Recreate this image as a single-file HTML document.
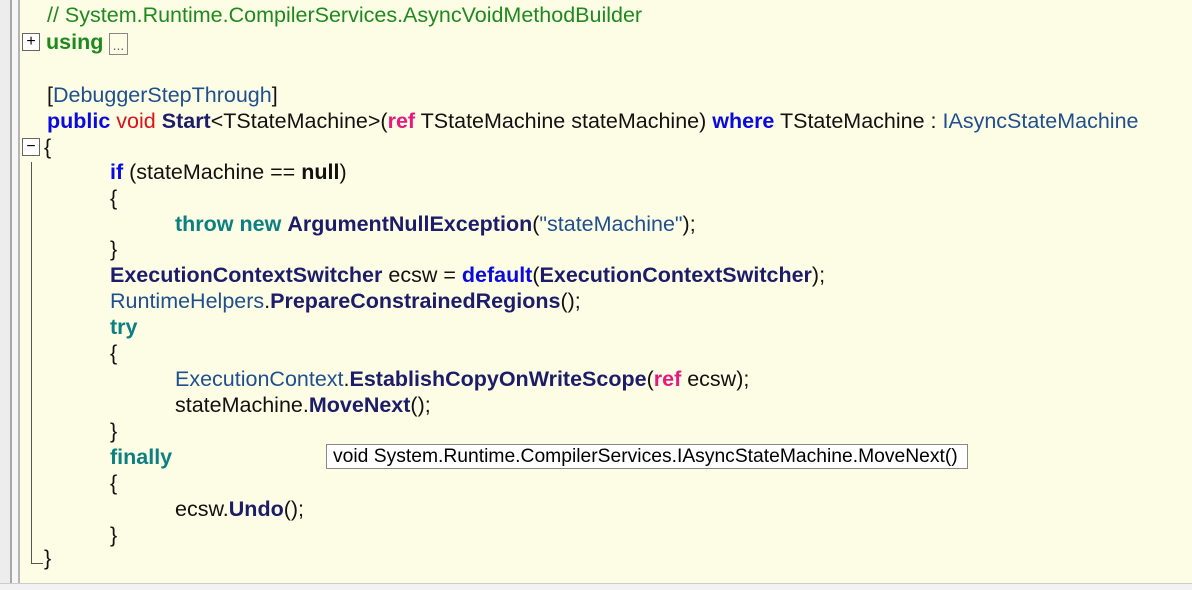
<!DOCTYPE html>
<html><head><meta charset="utf-8"><style>
body{margin:0;width:1192px;height:589px;overflow:hidden;background:#fdfde6;font-family:"Liberation Sans",Arial,sans-serif;position:relative}
.g0{position:absolute;left:0;top:0;width:10px;height:589px;background:#ededed}
.g1{position:absolute;left:10px;top:0;width:2px;height:589px;background:#a8a8a8}
.g2{position:absolute;left:12px;top:0;width:6px;height:589px;background:#f6f6f6}
.g3{position:absolute;left:18px;top:0;width:2px;height:589px;background:#b5b5b5}
.bot{position:absolute;left:0;top:583px;width:1192px;height:6px;background:#f2f2f2;border-top:1px solid #ccc}
.l{position:absolute;font-size:21.5px;white-space:pre;color:#111;line-height:26px}
b{font-weight:bold}
.cm{color:#1e8a1e}.gr{color:#1e8a1e;font-weight:bold}
.ty{color:#1f4f8f}.kw{color:#0a0ae0;font-weight:bold}.rd{color:#e0101a}
.mt{color:#1c1c6a;font-weight:bold}.rf{color:#e8197d;font-weight:bold}
.tl{color:#0a8080;font-weight:bold}.bk{color:#111;font-weight:bold}
.box{position:absolute;width:16px;height:16px;border:1px solid #666;background:#fff;font-size:16px;line-height:15px;text-align:center;color:#000}
.tip{position:absolute;left:326px;top:444px;border:1px solid #888;background:#fff;font-size:19.3px;line-height:23px;padding-left:6px;box-sizing:border-box;width:642px;height:25px}
</style></head><body>
<div class="g0"></div><div class="g1"></div><div class="g2"></div><div class="g3"></div>
<div style="position:absolute;left:31px;top:162px;width:1px;height:402px;background:#555"></div>
<div style="position:absolute;left:31px;top:563px;width:12px;height:1px;background:#555"></div>
<div class="box" style="left:22px;top:33px">+</div>
<div style="position:absolute;left:109px;top:33px;width:17px;height:20px;border:1px solid #888;font-size:14px;color:#666;line-height:22px;text-align:center">...</div>
<div class="box" style="left:22px;top:138px">−</div>
<div class="l" style="left:47px;top:2px"><span class="cm">// System.Runtime.CompilerServices.AsyncVoidMethodBuilder</span></div>
<div class="l" style="left:46px;top:29px"><span class="gr">using</span></div>
<div class="l" style="left:47px;top:82px">[<span class="ty">DebuggerStepThrough</span>]</div>
<div class="l" style="left:47px;top:108px"><span class="kw">public</span> <span class="rd">void</span> <span class="mt">Start</span>&lt;TStateMachine&gt;(<span class="rf">ref</span> TStateMachine stateMachine) <span class="kw">where</span> TStateMachine : <span class="ty">IAsyncStateMachine</span></div>
<div class="l" style="left:44px;top:134px">{</div>
<div class="l" style="left:110px;top:159px"><span class="kw">if</span> (stateMachine == <span class="bk">null</span>)</div>
<div class="l" style="left:110px;top:185px">{</div>
<div class="l" style="left:175px;top:211px"><span class="tl">throw</span> <span class="tl">new</span> <span class="mt">ArgumentNullException</span>(<span class="ty">"stateMachine"</span>);</div>
<div class="l" style="left:110px;top:236px">}</div>
<div class="l" style="left:110px;top:262px"><span class="mt">ExecutionContextSwitcher</span> ecsw = <span class="kw">default</span>(<span class="mt">ExecutionContextSwitcher</span>);</div>
<div class="l" style="left:110px;top:288px"><span class="ty">RuntimeHelpers</span>.<span class="mt">PrepareConstrainedRegions</span>();</div>
<div class="l" style="left:110px;top:314px"><span class="tl">try</span></div>
<div class="l" style="left:110px;top:340px">{</div>
<div class="l" style="left:175px;top:366px"><span class="ty">ExecutionContext</span>.<span class="mt">EstablishCopyOnWriteScope</span>(<span class="rf">ref</span> ecsw);</div>
<div class="l" style="left:175px;top:392px">stateMachine.<span class="mt">MoveNext</span>();</div>
<div class="l" style="left:110px;top:418px">}</div>
<div class="l" style="left:110px;top:444px"><span class="tl">finally</span></div>
<div class="l" style="left:110px;top:470px">{</div>
<div class="l" style="left:175px;top:496px">ecsw.<span class="mt">Undo</span>();</div>
<div class="l" style="left:110px;top:522px">}</div>
<div class="l" style="left:44px;top:545px">}</div>
<div class="tip">void System.Runtime.CompilerServices.IAsyncStateMachine.MoveNext()</div>
<div class="bot"></div>
</body></html>
